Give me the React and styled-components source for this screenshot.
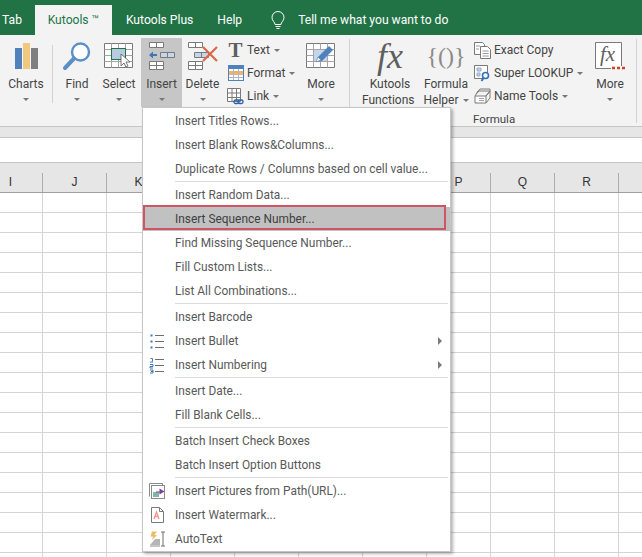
import React from 'react';
import styled, {createGlobalStyle} from 'styled-components';

const UI_FONT = 'Roboto, "Open Sans", "Liberation Sans", sans-serif';

const GlobalStyle = createGlobalStyle`
  html, body {
    margin: 0;
    background: #fff;
  }
`;

const Page = styled.div`
  position: relative;
  width: 642px;
  height: 557px;
  overflow: hidden;
  font-family: ${UI_FONT};
  background: #fff;
`;

const TabBar = styled.div`
  display: flex;
  align-items: flex-end;
  height: 35px;
  padding-left: 2px;
  background: #217346;
  color: #fff;
  font-size: 12.1px;
`;

const Tab = styled.div`
  display: flex;
  align-items: center;
  justify-content: center;
  height: 30px;
  margin-left: ${props => props.$gap || 0}px;
  width: ${props => (props.$width ? `${props.$width}px` : 'auto')};
  background: ${props => (props.$active ? '#f3f3f3' : 'transparent')};
  color: ${props => (props.$active ? '#217346' : '#fff')};
`;

const Ribbon = styled.div`
  display: flex;
  height: 92px;
  padding-top: 3px;
  box-sizing: border-box;
  background: #f3f3f3;
  border-bottom: 1px solid #c6c6c6;
`;

const Separator = styled.div`
  width: 1px;
  margin: ${props => (props.$short ? '7px' : '1px')} ${props => props.$right || 0}px ${props => (props.$short ? '23px' : '3px')} ${props => props.$left || 0}px;
  background: #d2d2d2;
`;

const LargeButton = styled.div`
  display: flex;
  flex-direction: column;
  align-items: center;
  flex: none;
  width: ${props => props.$width}px;
  height: 69px;
  background: ${props => (props.$active ? '#c6c6c6' : 'transparent')};
  color: #444;
  font-size: 12px;
  line-height: 16px;
`;

const IconSlot = styled.div`
  display: flex;
  align-items: center;
  justify-content: center;
  height: 36px;
  margin-bottom: 2px;
`;

const Caret = styled.span`
  display: inline-block;
  width: 0;
  height: 0;
  border-left: 3px solid transparent;
  border-right: 3px solid transparent;
  border-top: 3px solid #777;
`;

const CaretRow = styled.div`
  display: flex;
  justify-content: center;
  margin-top: 6px;
`;

const InlineCaret = styled(Caret)`
  margin-left: 4px;
  vertical-align: 2px;
`;

const SmallStack = styled.div`
  display: flex;
  flex-direction: column;
  flex: none;
  gap: 1px;
  width: ${props => props.$width}px;
  margin-left: ${props => props.$left || 0}px;
  padding-top: 1px;
`;

const SmallButton = styled.div`
  display: flex;
  align-items: center;
  gap: 3px;
  height: 22px;
  color: #444;
  font-size: 12px;
  white-space: nowrap;
`;

const SmallIcon = styled.div`
  display: flex;
  justify-content: center;
  width: 17px;
`;

const BigGlyph = styled.span`
  font-family: "Liberation Serif", serif;
  color: ${props => props.$color || '#5f5f5f'};
  font-size: ${props => props.$size}px;
  font-style: ${props => (props.$italic ? 'italic' : 'normal')};
  font-weight: ${props => (props.$bold ? 700 : 400)};
  line-height: 36px;
`;

const FormulaGroup = styled.div`
  display: flex;
  flex-direction: column;
  padding-left: 12px;
`;

const FormulaControls = styled.div`
  display: flex;
  height: 76px;
`;

const GroupLabel = styled.div`
  padding-left: 111px;
  color: #444;
  font-size: 11.5px;
  line-height: 13px;
`;

const Strip = styled.div`
  height: 10px;
  background: #e6e6e6;
  border-bottom: 1px solid #c6c6c6;
`;

const FormulaBar = styled.div`
  height: 24px;
  background: #fff;
  border-bottom: 1px solid #c6c6c6;
`;

const Sheet = styled.div`
  margin-left: -21px;
  width: 704px;
`;

const HeaderRow = styled.div`
  display: grid;
  grid-template-columns: repeat(10, 64px) 1fr;
  height: 29px;
  background: #e6e6e6;
  border-bottom: 1px solid #9f9f9f;
`;

const HeaderCell = styled.div`
  display: flex;
  align-items: center;
  justify-content: center;
  margin-top: 10px;
  border-right: 1px solid #acacac;
  color: #333;
  font-family: "Liberation Sans", sans-serif;
  font-size: 12px;
  padding-bottom: 2px;
  box-sizing: border-box;
  height: 19px;
`;

const SheetRow = styled.div`
  display: grid;
  grid-template-columns: repeat(10, 64px) 1fr;
  height: 20px;
`;

const SheetCell = styled.div`
  box-sizing: border-box;
  border-right: 1px solid #d4d4d4;
  border-bottom: 1px solid #d4d4d4;
`;

const Menu = styled.div`
  position: absolute;
  left: 142px;
  top: 107px;
  width: 309px;
  height: 445px;
  box-sizing: border-box;
  padding-top: 1px;
  background: #fff;
  border: 1px solid #c6c6c6;
  box-shadow: 2px 2px 3px rgba(0, 0, 0, 0.3);
`;

const MenuRow = styled.div`
  position: relative;
  display: flex;
  align-items: center;
  height: 24px;
  background: ${props => (props.$selected ? '#c1c1c1' : 'transparent')};
  color: ${props => (props.$selected ? '#404040' : '#595959')};
  font-size: 11.9px;
  white-space: nowrap;
`;

const MenuIcon = styled.div`
  display: flex;
  align-items: center;
  justify-content: center;
  flex: none;
  width: 28px;
  margin-right: 4px;
`;

const SubmenuArrow = styled.span`
  position: absolute;
  right: 8px;
  top: 8px;
  width: 0;
  height: 0;
  border-top: 4px solid transparent;
  border-bottom: 4px solid transparent;
  border-left: 4px solid #7b7b7b;
`;

const Callout = styled.div`
  position: absolute;
  left: 0;
  top: -2px;
  width: 303px;
  height: 25px;
  box-sizing: border-box;
  border: 2px solid #cf5564;
`;

const MenuDivider = styled.div`
  height: 2px;
  margin-left: 32px;
  margin-right: 2px;
  border-top: 1px solid #dcdcdc;
  box-sizing: border-box;
`;

const BLUE = '#5b8fc7';
const GREY = '#7a7a7a';

const ChartsIcon = () => (
  <svg width="26" height="28" viewBox="0 0 26 28">
    <rect x="2" y="6" width="7" height="21" fill="#4f81bd" />
    <rect x="10" y="1" width="7" height="26" fill="#f0c97f" />
    <rect x="18" y="6" width="7" height="21" fill="#7f7f7f" />
  </svg>
);

const FindIcon = () => (
  <svg width="30" height="30" viewBox="0 0 30 30">
    <circle cx="18.500" cy="11" r="8.500" fill="#fff" stroke={BLUE} strokeWidth="2.400" />
    <path d="M12 17.500 L3 27" stroke={BLUE} strokeWidth="4" strokeLinecap="round" />
  </svg>
);

const SelectIcon = () => (
  <svg width="30" height="28" viewBox="0 0 30 28">
    <path d="M.5 1.500h28v24H.5z" fill="#fff" stroke={GREY} />
    <path d="M.5 7.500h28M.5 13.500h28M.5 19.500h28M7.500 1.500v24M14.500 1.500v24M21.500 1.500v24" stroke="#a5a5a5" />
    <rect x="7.500" y="6.500" width="14" height="11" fill="#b7cbe0" stroke="#217346" />
    <path d="M17 12 v12 l3-3 2 4 2-1-2-4 4 0z" fill="#fff" stroke="#555" strokeWidth=".8" />
  </svg>
);

const InsertIcon = () => (
  <svg width="28" height="30" viewBox="0 0 28 30">
    <path d="M1.500 1.500h14v5h-14zM8.500 1.500v5M1.500 20.500h14v8h-14zM1.500 24.500h14M8.500 20.500v8" fill="#fff" stroke={GREY} />
    <path d="M12.500 11.500h14v5h-14zM19.500 11.500v5" fill="#c5d6ea" stroke={GREY} />
    <path d="M1 14 l4-3.500v2.400h4v2.200H5v2.400z" fill="#3f76b5" />
  </svg>
);

const DeleteIcon = () => (
  <svg width="32" height="30" viewBox="0 0 32 30">
    <path d="M1.500 1.500h14v5h-14zM8.500 1.500v5M1.500 20.500h14v8h-14zM1.500 24.500h14M8.500 20.500v8" fill="#fff" stroke={GREY} />
    <path d="M7.500 11.500h14v5h-14zM14.500 11.500v5" fill="#c5d6ea" stroke={GREY} />
    <path d="M16 6 L30 20 M30 6 L16 20" stroke="#d9684a" strokeWidth="2.200" />
  </svg>
);

const FormatIcon = () => (
  <svg width="16" height="16" viewBox="0 0 16 16">
    <rect x=".5" y=".5" width="15" height="15" fill="#fff" stroke="#4f81bd" />
    <rect x="1" y="1" width="14" height="3" fill="#4f81bd" />
    <rect x="1" y="6" width="14" height="4" fill="#f3b26b" />
    <path d="M1 12.500h14M5.500 4v11M10.500 4v11" stroke="#a5b9d2" />
  </svg>
);

const LinkIcon = () => (
  <svg width="17" height="17" viewBox="0 0 17 17">
    <path d="M.5 .5h13v13H.5zM.5 5h13M.5 9.500h13M5 .5v13M9.500 .5v13" fill="#fff" stroke={GREY} />
    <rect x="7" y="12" width="5" height="3.500" rx="1.500" fill="none" stroke="#2a62a8" strokeWidth="1.300" />
    <rect x="11" y="12" width="5" height="3.500" rx="1.500" fill="none" stroke="#2a62a8" strokeWidth="1.300" />
  </svg>
);

const MoreIcon = () => (
  <svg width="30" height="28" viewBox="0 0 30 28">
    <path d="M.5 1.500h28v24H.5z" fill="#fff" stroke={GREY} />
    <path d="M.5 7.500h28M.5 13.500h28M.5 19.500h28M7.500 1.500v24M14.500 1.500v24M21.500 1.500v24" stroke="#a5a5a5" />
    <rect x="8" y="8" width="13" height="11" fill="#c5d6ea" />
    <path d="M10 20 L12 15 L23 4 L27 8 L16 19z" fill="#4f81bd" />
    <path d="M10 20 L12 15 L15 18z" fill="#fff" stroke="#4f81bd" strokeWidth=".6" />
  </svg>
);

const CopyIcon = () => (
  <svg width="17" height="17" viewBox="0 0 17 17">
    <path d="M.5 .5h8l2 2v10H.5z" fill="#fff" stroke={GREY} />
    <path d="M6.500 4.500h7l3 3v9h-10z" fill="#fff" stroke={GREY} />
    <path d="M2 4h4M2 7h3M8.500 9h6M8.500 11.500h6M8.500 14h6" stroke="#9a9a9a" />
  </svg>
);

const LookupIcon = () => (
  <svg width="17" height="17" viewBox="0 0 17 17">
    <path d="M.5 .5h13v13H.5z" fill="#fff" stroke={GREY} />
    <path d="M3 3h4v3H3zM3 8h3v3H3z" fill="#c5d6ea" stroke="#7f9cc0" strokeWidth=".8" />
    <circle cx="11.500" cy="10.500" r="3" fill="#fff" stroke="#2f6fb5" strokeWidth="1.600" />
    <path d="M9.500 13 L7.500 16" stroke="#2f6fb5" strokeWidth="2" />
  </svg>
);

const NameIcon = () => (
  <svg width="17" height="16" viewBox="0 0 17 16">
    <path d="M1 8 h11 v7 H1z" fill="#fff" stroke={GREY} />
    <path d="M1 8 L4 3 h12 l-4 5 M3 5.500 L6 1 h10 v2 M12 8 L16 3 v7 l-4 5" fill="none" stroke={GREY} />
    <path d="M5 10.500h5M5 12.500h5" stroke="#a5a5a5" />
  </svg>
);

const FxBoxIcon = () => (
  <svg width="31" height="30" viewBox="0 0 31 30">
    <path d="M.5 1.500h26v26H.5z" fill="#fff" stroke={GREY} />
    <text x="5" y="20" fontFamily='"Liberation Serif", serif' fontStyle="italic" fontSize="21" fill="#5f5f5f">
      fx
    </text>
    <rect x="16" y="25" width="14" height="4" fill="#f3f3f3" />
    <path d="M17 27h3M22 27h3M27 27h3" stroke="#c9442f" strokeWidth="2.500" />
  </svg>
);

const BulletIcon = () => (
  <svg width="16" height="16" viewBox="0 0 16 16">
    <path d="M6 2.500h9M6 8.500h9M6 14.500h9" stroke="#6d6d6d" />
    <path d="M1.500 2.500h2M1.500 8.500h2M1.500 14.500h2" stroke="#3f76b5" strokeWidth="2" />
  </svg>
);

const NumberingIcon = () => (
  <svg width="16" height="17" viewBox="0 0 16 17">
    <path d="M6 2.500h9M6 8.500h9M6 14.500h9" stroke="#6d6d6d" />
    <path d="M1.500 1.500h2v3M1 5h3M1 7.500h3v2H1v1.500h3M1 13h3v3H1M2 14.500h2" fill="none" stroke="#3f76b5" />
  </svg>
);

const PicturesIcon = () => (
  <svg width="16" height="16" viewBox="0 0 16 16">
    <path d="M.5 .5h13v2M.5 .5v13" fill="none" stroke="#8a8a8a" />
    <rect x="2.500" y="2.500" width="13" height="13" fill="#fff" stroke="#8a8a8a" />
    <rect x="4" y="9" width="6" height="5" fill="#7fb8a4" />
    <path d="M7 8.500h3.500V5.500L15.500 8.500 10.500 11.500V9.500H7z" fill="#7a3fa0" />
  </svg>
);

const WatermarkIcon = () => (
  <svg width="13" height="16" viewBox="0 0 13 16">
    <path d="M.5 .5h8l4 4v11H.5z" fill="#fff" stroke="#7a7a7a" />
    <path d="M8.500 .5v4h4" fill="none" stroke="#7a7a7a" />
    <path d="M3 12 L5.500 5 L8 12M4 9.500h3" fill="none" stroke="#ef9a90" strokeWidth="1.400" />
  </svg>
);

const AutoTextIcon = () => (
  <svg width="17" height="16" viewBox="0 0 17 16">
    <path d="M3 .5h5L5.500 4H8L3 9l1-3.500H1.500z" fill="#efbb6f" />
    <path d="M1 14 L6 8h5v6z" fill="#b5b5b5" />
    <path d="M12 1h4M14 1v14M12 15h4" fill="none" stroke="#6d6d6d" />
    <path d="M1 15h10" stroke="#8a8a8a" />
  </svg>
);

const MENU_ITEMS = [
  {label: 'Insert Titles Rows...'},
  {label: 'Insert Blank Rows&Columns...'},
  {label: 'Duplicate Rows / Columns based on cell value...'},
  {divider: true},
  {label: 'Insert Random Data...'},
  {label: 'Insert Sequence Number...', selected: true},
  {label: 'Find Missing Sequence Number...'},
  {label: 'Fill Custom Lists...'},
  {label: 'List All Combinations...'},
  {divider: true},
  {label: 'Insert Barcode'},
  {label: 'Insert Bullet', icon: <BulletIcon />, submenu: true},
  {label: 'Insert Numbering', icon: <NumberingIcon />, submenu: true},
  {divider: true},
  {label: 'Insert Date...'},
  {label: 'Fill Blank Cells...'},
  {divider: true},
  {label: 'Batch Insert Check Boxes'},
  {label: 'Batch Insert Option Buttons'},
  {divider: true},
  {label: 'Insert Pictures from Path(URL)...', icon: <PicturesIcon />},
  {label: 'Insert Watermark...', icon: <WatermarkIcon />},
  {label: 'AutoText', icon: <AutoTextIcon />}
];

const COLUMNS = ['I', 'J', 'K', 'L', 'M', 'N', 'O', 'P', 'Q', 'R', ''];
const ROW_COUNT = 19;

const Large = ({width, icon, label, active}) => (
  <LargeButton $width={width} $active={active}>
    <IconSlot>{icon}</IconSlot>
    <div>{label}</div>
    <CaretRow>
      <Caret />
    </CaretRow>
  </LargeButton>
);

const TwoLine = ({width, icon, first, second}) => (
  <LargeButton $width={width}>
    <IconSlot>{icon}</IconSlot>
    <div>{first}</div>
    <div>
      {second}
      <InlineCaret />
    </div>
  </LargeButton>
);

const Small = ({icon, label, caret}) => (
  <SmallButton>
    <SmallIcon>{icon}</SmallIcon>
    <span>
      {label}
      {caret && <InlineCaret />}
    </span>
  </SmallButton>
);

const App = () => (
  <Page>
    <GlobalStyle />
    <TabBar>
      <Tab>Tab</Tab>
      <Tab $active $width={77} $gap={13}>
        Kutools ™
      </Tab>
      <Tab $gap={14}>Kutools Plus</Tab>
      <Tab $gap={24}>Help</Tab>
      <Tab $gap={27}>
        <svg width="18" height="20" viewBox="0 0 18 20">
          <path
            d="M6 14.500C6 12 3 11 3 7.500a6 6 0 0 1 12 0C15 11 12 12 12 14.500zM6.500 16.500h5M7.500 18.500h3"
            fill="none"
            stroke="#fff"
          />
        </svg>
      </Tab>
      <Tab $gap={11}>Tell me what you want to do</Tab>
    </TabBar>
    <Ribbon>
      <Large width={52} icon={<ChartsIcon />} label="Charts" />
      <Separator $short $right={4} />
      <Large width={40} icon={<FindIcon />} label="Find" />
      <Large width={44} icon={<SelectIcon />} label="Select" />
      <Large width={41} active icon={<InsertIcon />} label="Insert" />
      <Large width={41} icon={<DeleteIcon />} label="Delete" />
      <SmallStack $width={76} $left={4}>
        <Small icon={<BigGlyph $size={21} $bold>T</BigGlyph>} label="Text" caret />
        <Small icon={<FormatIcon />} label="Format" caret />
        <Small icon={<LinkIcon />} label="Link" caret />
      </SmallStack>
      <Large width={36} icon={<MoreIcon />} label="More" />
      <Separator $left={10} />
      <FormulaGroup>
        <FormulaControls>
          <TwoLine width={56} icon={<BigGlyph $size={36} $italic>fx</BigGlyph>} first="Kutools" second="Functions" />
          <TwoLine width={56} icon={<BigGlyph $size={24} $color="#8a8a8a">{'{()}'}</BigGlyph>} first="Formula" second="Helper" />
          <SmallStack $width={117}>
            <Small icon={<CopyIcon />} label="Exact Copy" />
            <Small icon={<LookupIcon />} label="Super LOOKUP" caret />
            <Small icon={<NameIcon />} label="Name Tools" caret />
          </SmallStack>
          <Large width={38} icon={<FxBoxIcon />} label="More" />
        </FormulaControls>
        <GroupLabel>Formula</GroupLabel>
      </FormulaGroup>
      <Separator $left={7} />
    </Ribbon>
    <Strip />
    <FormulaBar />
    <Sheet>
      <HeaderRow>
        {COLUMNS.map(column => (
          <HeaderCell key={column}>{column}</HeaderCell>
        ))}
      </HeaderRow>
      {Array.from({length: ROW_COUNT}, (_, row) => (
        <SheetRow key={row}>
          {COLUMNS.map(column => (
            <SheetCell key={column} />
          ))}
        </SheetRow>
      ))}
    </Sheet>
    <Menu>
      {MENU_ITEMS.map((item, index) =>
        item.divider ? (
          <MenuDivider key={index} />
        ) : (
          <MenuRow key={item.label} $selected={item.selected}>
            <MenuIcon>{item.icon}</MenuIcon>
            {item.label}
            {item.submenu && <SubmenuArrow />}
            {item.selected && <Callout />}
          </MenuRow>
        )
      )}
    </Menu>
  </Page>
);

export default App;
